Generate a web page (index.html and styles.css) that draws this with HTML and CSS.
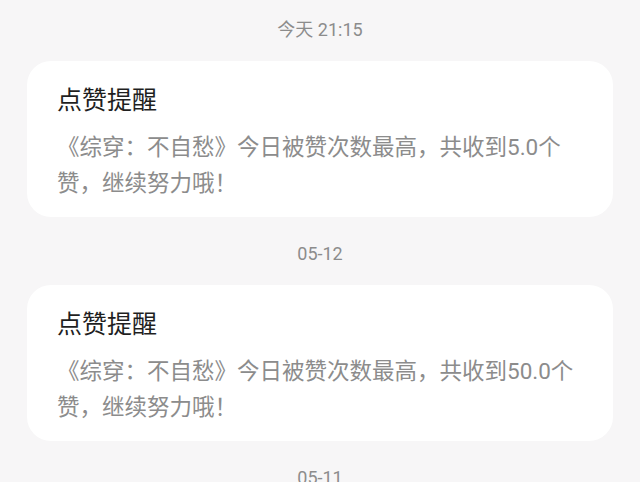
FILE: index.html
```html
<!DOCTYPE html>
<html lang="zh-CN">
<head>
    <meta charset="UTF-8">
    <title>点赞提醒</title>
    <link rel="stylesheet" href="styles.css">
</head>
<body>
<div id="notice">
    <!-- 今天 -->
    <div class="date">今天 21:15</div>
    <div class="card">
        <h2 class="title">点赞提醒</h2>
        <p class="desc">《综穿：不自愁》今日被赞次数最高，共收到5.0个赞，继续努力哦！</p>
    </div>

    <!-- 05-12 -->
    <div class="date">05-12</div>
    <div class="card">
        <h2 class="title">点赞提醒</h2>
        <p class="desc">《综穿：不自愁》今日被赞次数最高，共收到50.0个赞，继续努力哦！</p>
    </div>

    <!-- 05-11 -->
    <div class="date">05-11</div>
</div>
</body>
</html>
```

FILE: styles.css
```css
html, body{
    margin: 0;
    background-color: #f7f6f7;
}
#notice{
    font-family: Roboto, "Noto Sans CJK SC", sans-serif;
}
#notice .date{
    padding: 25px 0 19px;
    line-height: 24px;
    font-size: 18px;
    color: #8c8c8c;
    text-align: center;
}
#notice .date:first-child{
    padding-top: 18px;
}
#notice .card{
    margin: 0 27px;
    padding: 22px 36px 16px 30px;
    background-color: #fff;
    border-radius: 24px;
}
#notice .title{
    margin: 0;
    font-size: 25px;
    font-weight: normal;
    line-height: 36px;
    color: #1f1f1f;
}
#notice .desc{
    margin: 10px 0 0;
    font-size: 22.5px;
    line-height: 36px;
    color: #8c8c8c;
}
```
